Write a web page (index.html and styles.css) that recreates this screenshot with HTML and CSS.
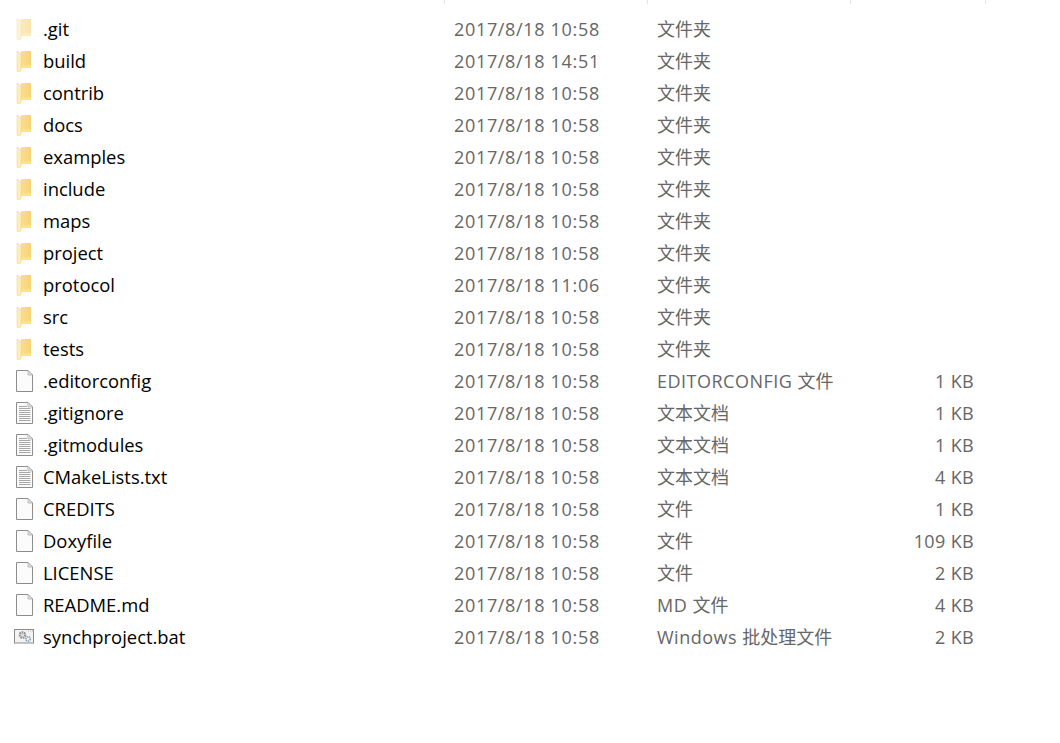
FILE: index.html
```html
<!DOCTYPE html>
<html lang="zh-CN">
<head>
    <meta charset="UTF-8">
    <title>File list</title>
    <link rel="stylesheet" href="styles.css">
</head>
<body>
    <svg class="defs" width="0" height="0">
        <defs>
            <linearGradient id="folder-back" x1="0" y1="0" x2="1" y2="0">
                <stop offset="0" stop-color="#f9e39e"/>
                <stop offset="1" stop-color="#f7d272"/>
            </linearGradient>
            <symbol id="i-folder" viewBox="0 0 22 22">
                <path d="M3 1H17V18H7V1Z" fill="url(#folder-back)"/>
                <path d="M17 15V18H7V15Z" fill="#fbe08f"/>
                <path d="M3 1L7 3V21L3.500 22L3 20Z" fill="#fdeeb9" stroke="#eccf7c" stroke-width=".5"/>
            </symbol>
            <symbol id="i-file" viewBox="0 0 22 22">
                <path d="M2.500 .5H14L18.500 5V21.500H2.500Z" fill="#fbfbfc" stroke="#8d8d8d"/>
                <path d="M14 .5V5H18.500Z" fill="#e6e6e6" stroke="#a5a5a5" stroke-width=".7"/>
            </symbol>
            <symbol id="i-text" viewBox="0 0 22 22">
                <path d="M2.500 .5H14L18.500 5V21.500H2.500Z" fill="#fbfbfc" stroke="#8d8d8d"/>
                <path d="M14 .5V5H18.500Z" fill="#e6e6e6" stroke="#a5a5a5" stroke-width=".7"/>
                <path d="M5 4.500H13M5 6.500H16.500M5 8.500H16.500M5 10.500H16.500M5 12.500H16.500M5 14.500H16.500M5 16.500H16.500M5 18.500H16.500" stroke="#a8a8a8" fill="none"/>
            </symbol>
            <symbol id="i-bat" viewBox="0 0 22 22">
                <rect x=".5" y="3.500" width="19" height="13.500" fill="#f2f2f2" stroke="#8c8c8c"/>
                <path d="M14 5H15M16 5H17M18 5H19" stroke="#bdbdbd"/>
                <circle cx="8.500" cy="9" r="2.800" fill="#ddd" stroke="#8a8a8a" stroke-width="2" stroke-dasharray="1.600 .8"/>
                <circle cx="14" cy="13" r="2.200" fill="#eef2f5" stroke="#8fa4b5" stroke-width="1.800" stroke-dasharray="1.300 .7"/>
            </symbol>
        </defs>
    </svg>

    <div class="list">
        <div class="head">
            <span class="tick tick-name"></span>
            <span class="tick tick-date"></span>
            <span class="tick tick-type"></span>
            <span class="tick tick-size"></span>
        </div>
        <div class="rows">
            <div class="row hidden-item"><svg class="icon"><use href="#i-folder"/></svg><span class="name">.git</span><span class="date">2017/8/18 10:58</span><span class="type">文件夹</span><span class="size"></span></div>
            <div class="row"><svg class="icon"><use href="#i-folder"/></svg><span class="name">build</span><span class="date">2017/8/18 14:51</span><span class="type">文件夹</span><span class="size"></span></div>
            <div class="row"><svg class="icon"><use href="#i-folder"/></svg><span class="name">contrib</span><span class="date">2017/8/18 10:58</span><span class="type">文件夹</span><span class="size"></span></div>
            <div class="row"><svg class="icon"><use href="#i-folder"/></svg><span class="name">docs</span><span class="date">2017/8/18 10:58</span><span class="type">文件夹</span><span class="size"></span></div>
            <div class="row"><svg class="icon"><use href="#i-folder"/></svg><span class="name">examples</span><span class="date">2017/8/18 10:58</span><span class="type">文件夹</span><span class="size"></span></div>
            <div class="row"><svg class="icon"><use href="#i-folder"/></svg><span class="name">include</span><span class="date">2017/8/18 10:58</span><span class="type">文件夹</span><span class="size"></span></div>
            <div class="row"><svg class="icon"><use href="#i-folder"/></svg><span class="name">maps</span><span class="date">2017/8/18 10:58</span><span class="type">文件夹</span><span class="size"></span></div>
            <div class="row"><svg class="icon"><use href="#i-folder"/></svg><span class="name">project</span><span class="date">2017/8/18 10:58</span><span class="type">文件夹</span><span class="size"></span></div>
            <div class="row"><svg class="icon"><use href="#i-folder"/></svg><span class="name">protocol</span><span class="date">2017/8/18 11:06</span><span class="type">文件夹</span><span class="size"></span></div>
            <div class="row"><svg class="icon"><use href="#i-folder"/></svg><span class="name">src</span><span class="date">2017/8/18 10:58</span><span class="type">文件夹</span><span class="size"></span></div>
            <div class="row"><svg class="icon"><use href="#i-folder"/></svg><span class="name">tests</span><span class="date">2017/8/18 10:58</span><span class="type">文件夹</span><span class="size"></span></div>
            <div class="row"><svg class="icon"><use href="#i-file"/></svg><span class="name">.editorconfig</span><span class="date">2017/8/18 10:58</span><span class="type"><span class="latin">EDITORCONFIG </span>文件</span><span class="size">1 KB</span></div>
            <div class="row"><svg class="icon"><use href="#i-text"/></svg><span class="name">.gitignore</span><span class="date">2017/8/18 10:58</span><span class="type">文本文档</span><span class="size">1 KB</span></div>
            <div class="row"><svg class="icon"><use href="#i-text"/></svg><span class="name">.gitmodules</span><span class="date">2017/8/18 10:58</span><span class="type">文本文档</span><span class="size">1 KB</span></div>
            <div class="row"><svg class="icon"><use href="#i-text"/></svg><span class="name">CMakeLists.txt</span><span class="date">2017/8/18 10:58</span><span class="type">文本文档</span><span class="size">4 KB</span></div>
            <div class="row"><svg class="icon"><use href="#i-file"/></svg><span class="name">CREDITS</span><span class="date">2017/8/18 10:58</span><span class="type">文件</span><span class="size">1 KB</span></div>
            <div class="row"><svg class="icon"><use href="#i-file"/></svg><span class="name">Doxyfile</span><span class="date">2017/8/18 10:58</span><span class="type">文件</span><span class="size">109 KB</span></div>
            <div class="row"><svg class="icon"><use href="#i-file"/></svg><span class="name">LICENSE</span><span class="date">2017/8/18 10:58</span><span class="type">文件</span><span class="size">2 KB</span></div>
            <div class="row"><svg class="icon"><use href="#i-file"/></svg><span class="name">README.md</span><span class="date">2017/8/18 10:58</span><span class="type"><span class="latin">MD </span>文件</span><span class="size">4 KB</span></div>
            <div class="row"><svg class="icon"><use href="#i-bat"/></svg><span class="name">synchproject.bat</span><span class="date">2017/8/18 10:58</span><span class="type"><span class="latin">Windows </span>批处理文件</span><span class="size">2 KB</span></div>
        </div>
    </div>
</body>
</html>
```

FILE: styles.css
```css
body {
    margin: 0;
    background-color: #fff;
    font-family: "Open Sans", "Noto Sans CJK SC", sans-serif;
    font-size: 18px;
    line-height: 24px;
}
.defs {
    display: block;
    height: 0;
}
.head {
    display: flex;
    height: 4px;
}
.tick {
    box-sizing: border-box;
    border-right: 1px solid #e5e5e5;
}
.tick-name { width: 445px; }
.tick-date { width: 203px; }
.tick-type { width: 203px; }
.tick-size { width: 135px; }
.rows {
    padding-top: 9px;
}
.row {
    display: flex;
    align-items: center;
    height: 32px;
    white-space: pre;
}
.icon {
    width: 22px;
    height: 22px;
    margin-left: 14px;
    margin-right: 7px;
    flex: none;
}
.name {
    width: 411px;
    font-size: 18.4px;
    color: #000;
}
.date {
    width: 203px;
    letter-spacing: 0.67px;
    color: #666;
}
.type {
    width: 220px;
    color: #666;
}
.latin {
    letter-spacing: 0.5px;
}
.size {
    width: 97px;
    text-align: right;
    letter-spacing: 0.35px;
    color: #666;
}
.hidden-item .icon {
    opacity: 0.6;
}
```
